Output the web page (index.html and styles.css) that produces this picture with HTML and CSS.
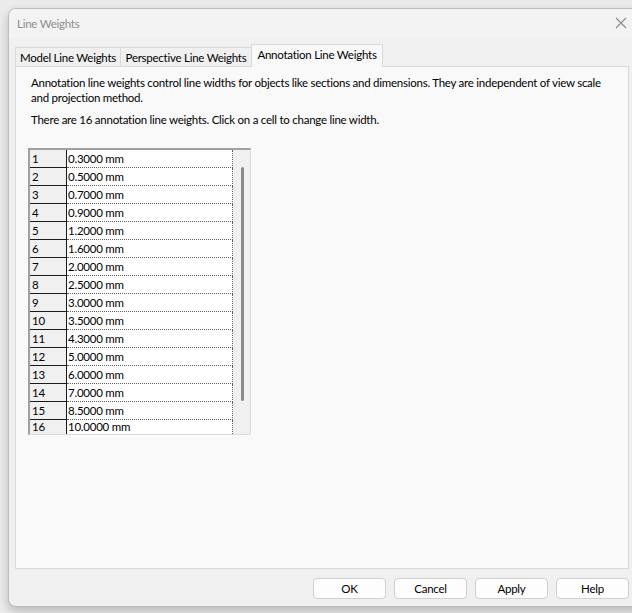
FILE: index.html
```html
<!DOCTYPE html>
<html>
<head>
<meta charset="utf-8">
<link rel="stylesheet" href="styles.css">
</head>
<body>
<div class="desktop">
  <div class="window">
    <div class="titlebar">
      <span class="title">Line Weights</span>
      <svg class="close" width="12" height="12" viewBox="0 0 12 12"><path d="M1 1 L11 11 M11 1 L1 11" stroke="#8a8a8a" stroke-width="1.1" fill="none"/></svg>
    </div>
    <div class="body">
      <div class="tabs">
        <div class="tab t1">Model Line Weights</div>
        <div class="tab t2">Perspective Line Weights</div>
        <div class="tab t3 active">Annotation Line Weights</div>
      </div>
      <div class="panel">
        <p class="desc">Annotation line weights control line widths for objects like sections and dimensions. They are independent of view scale and projection method.</p>
        <p class="desc second">There are 16 annotation line weights. Click on a cell to change line width.</p>
        <div class="grid">
          <div class="rows">
            <div class="row"><div class="idx">1</div><div class="val">0.3000 mm</div></div>
            <div class="row"><div class="idx">2</div><div class="val">0.5000 mm</div></div>
            <div class="row"><div class="idx">3</div><div class="val">0.7000 mm</div></div>
            <div class="row"><div class="idx">4</div><div class="val">0.9000 mm</div></div>
            <div class="row"><div class="idx">5</div><div class="val">1.2000 mm</div></div>
            <div class="row"><div class="idx">6</div><div class="val">1.6000 mm</div></div>
            <div class="row"><div class="idx">7</div><div class="val">2.0000 mm</div></div>
            <div class="row"><div class="idx">8</div><div class="val">2.5000 mm</div></div>
            <div class="row"><div class="idx">9</div><div class="val">3.0000 mm</div></div>
            <div class="row"><div class="idx">10</div><div class="val">3.5000 mm</div></div>
            <div class="row"><div class="idx">11</div><div class="val">4.3000 mm</div></div>
            <div class="row"><div class="idx">12</div><div class="val">5.0000 mm</div></div>
            <div class="row"><div class="idx">13</div><div class="val">6.0000 mm</div></div>
            <div class="row"><div class="idx">14</div><div class="val">7.0000 mm</div></div>
            <div class="row"><div class="idx">15</div><div class="val">8.5000 mm</div></div>
            <div class="row last"><div class="idx">16</div><div class="val">10.0000 mm</div></div>
          </div>
          <div class="scroll"><div class="thumb"></div></div>
        </div>
      </div>
      <div class="buttons">
        <button class="btn">OK</button>
        <button class="btn">Cancel</button>
        <button class="btn">Apply</button>
        <button class="btn">Help</button>
      </div>
    </div>
  </div>
</div>
</body>
</html>
```
FILE: styles.css
```css
html, body {
  margin: 0;
  padding: 0;
}
body {
  width: 632px;
  height: 613px;
  overflow: hidden;
  background: #ebebeb;
  font-family: Lato, "Liberation Sans", sans-serif;
  font-size: 11.5px;
  letter-spacing: -0.25px;
  color: #000;
}
.desktop {
  padding: 8px 0 0 8px;
}
.window {
  width: 640px;
  height: 599px;
  background: #f0f0f0;
  border: 1px solid #bdbdbd;
  border-radius: 8px 0 0 8px;
  box-shadow: 0 4px 10px rgba(0,0,0,0.22);
  display: flex;
  flex-direction: column;
  box-sizing: border-box;
  overflow: hidden;
}
.titlebar {
  height: 29px;
  flex: none;
  background: #f3f3f3;
  display: flex;
  align-items: center;
  padding-left: 8px;
  position: relative;
}
.title {
  color: #8e8e8e;
}
.close {
  position: absolute;
  left: 606px;
  top: 8px;
}
.body {
  flex: 1;
  display: flex;
  flex-direction: column;
  padding: 6px 0 0 6px;
}
.tabs {
  display: flex;
  align-items: flex-end;
  height: 22px;
  width: 614px;
}
.tab {
  height: 19px;
  box-sizing: border-box;
  border: 1px solid #d9d9d9;
  border-bottom: none;
  border-right: none;
  background: #f0f0f0;
  line-height: 19px;
  text-align: center;
  white-space: nowrap;
  overflow: hidden;
}
.t1 { width: 105px; }
.t2 { width: 131px; }
.t3 { width: 132px; }
.tab.active {
  height: 23px;
  background: #f9f9f9;
  border-right: 1px solid #d9d9d9;
  line-height: 19px;
  position: relative;
  top: 1px;
  z-index: 1;
}
.panel {
  width: 614px;
  height: 503px;
  box-sizing: border-box;
  background: #f9f9f9;
  border: 1px solid #d9d9d9;
  padding: 8px 0 0 12px;
  flex: none;
}
.desc {
  margin: 0 0 0 3px;
  width: 586px;
  line-height: 15px;
}
.desc.second {
  margin-top: 7px;
}
.grid {
  margin-top: 21px;
  width: 223px;
  height: 287px;
  box-sizing: border-box;
  border-top: 2px solid #a0a0a0;
  border-left: 2px solid #a0a0a0;
  border-right: 1px solid #dcdcdc;
  border-bottom: 1px solid #dcdcdc;
  display: flex;
  overflow: hidden;
}
.rows {
  width: 203px;
  flex: none;
}
.row {
  display: flex;
  height: 18px;
}
.idx {
  flex: none;
  width: 37px;
  box-sizing: border-box;
  background: #f0f0f0;
  border-right: 1px solid #1a1a1a;
  border-bottom: 1px solid #1a1a1a;
  padding-left: 2px;
  line-height: 17px;
}
.val {
  flex: 1;
  background: #fff;
  border-right: 1px dotted #606060;
  border-bottom: 1px dotted #606060;
  padding-left: 1px;
  line-height: 17px;
}
.row.last {
  height: 14px;
}
.row.last .idx,
.row.last .val {
  border-bottom: none;
  line-height: 14px;
}
.scroll {
  flex: 1;
  background: #f0f0f0;
  position: relative;
}
.thumb {
  position: absolute;
  left: 8px;
  top: 17px;
  width: 3px;
  height: 234px;
  border-radius: 2px;
  background: #8a8a8a;
}
.buttons {
  width: 614px;
  display: flex;
  justify-content: flex-end;
  gap: 8px;
  margin-top: 9px;
}
.btn {
  width: 73px;
  height: 21px;
  box-sizing: border-box;
  border: 1px solid #d0d0d0;
  border-radius: 4px;
  background: #fdfdfd;
  font-family: inherit;
  font-size: 11.5px;
  letter-spacing: -0.25px;
  color: #000;
  padding: 0;
  margin: 0;
}
```
